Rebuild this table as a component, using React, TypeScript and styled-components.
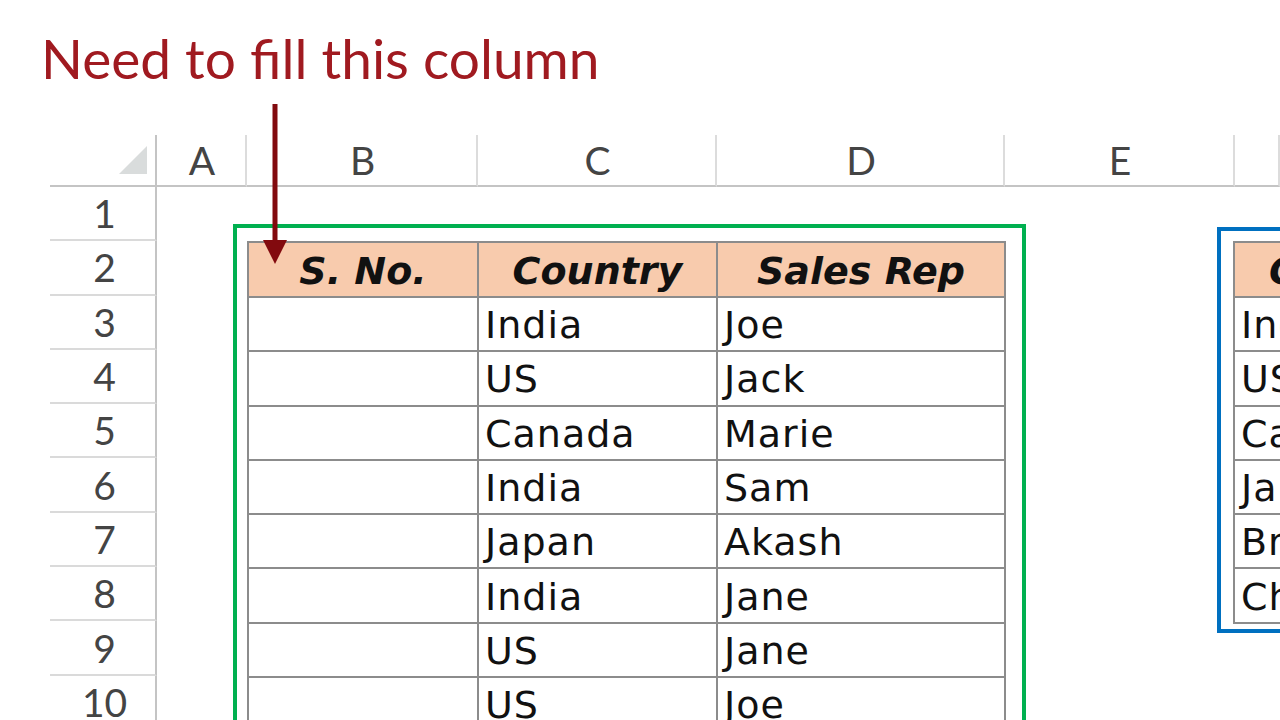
import React from 'react'
import styled, { createGlobalStyle } from 'styled-components'

const GlobalStyle = createGlobalStyle`
  html, body {
    margin: 0;
    padding: 0;
    background: #ffffff;
    overflow: hidden;
  }
`

const ROW_H = 54.3
const HEAD_FONT = `Lato, 'Open Sans', sans-serif`
const CELL_FONT = `'DejaVu Sans', Verdana, sans-serif`

const Page = styled.div`
  position: relative;
  width: 1280px;
  height: 720px;
  overflow: hidden;
  background: #fff;
`

const Title = styled.h1`
  margin: 0;
  height: 135px;
  box-sizing: border-box;
  padding: 31px 0 0 41px;
  font-family: ${HEAD_FONT};
  font-weight: 400;
  font-size: 55px;
  line-height: 1;
  color: #a01a20;
`

const Sheet = styled.div`
  margin-left: 50px;
  display: grid;
  grid-template-columns: 107px 90px 231px 239px 288px 230px 45px;
  grid-template-rows: 52px repeat(10, ${ROW_H}px);
`

const Corner = styled.div`
  grid-column: 1;
  grid-row: 1;
  border-right: 2px solid #c4c4c4;
  border-bottom: 2px solid #c4c4c4;
  display: flex;
  align-items: flex-end;
  justify-content: flex-end;
  padding: 0 8px 11px 0;
`

const CornerMark = styled.div`
  width: 0;
  height: 0;
  border-left: 28px solid transparent;
  border-bottom: 28px solid #d9dcdc;
`

const ColHead = styled.div<{ $col: number }>`
  grid-row: 1;
  grid-column: ${({ $col }) => $col};
  border-right: 2px solid #dcdcdc;
  border-bottom: 2px solid #c4c4c4;
  display: flex;
  align-items: center;
  justify-content: center;
  padding-left: 2px;
  font-family: ${HEAD_FONT};
  font-size: 39px;
  color: #444;
`

const RowHead = styled.div<{ $row: number }>`
  grid-column: 1;
  grid-row: ${({ $row }) => $row};
  border-right: 2px solid #c4c4c4;
  border-bottom: 2px solid #dadada;
  display: flex;
  align-items: center;
  justify-content: center;
  padding-left: 4px;
  font-family: ${HEAD_FONT};
  font-size: 39px;
  color: #444;
`

const Frame = styled.div<{ $color: string }>`
  align-self: start;
  justify-self: start;
  border: 4px solid ${({ $color }) => $color};
`

const GreenFrame = styled(Frame)`
  grid-column: 2 / 7;
  grid-row: 2 / 12;
  margin: 37px 0 0 76px;
  padding: 13px 16px 0 10px;
`

const BlueFrame = styled(Frame)`
  grid-column: 6 / 8;
  grid-row: 2 / 12;
  margin: 40px 0 0 212px;
  padding: 10px 0 5px 12px;
  width: 320px;
`

const DataTable = styled.div<{ $cols: string }>`
  display: grid;
  grid-template-columns: ${({ $cols }) => $cols};
  grid-auto-rows: ${ROW_H}px;
  grid-template-rows: 55px;
  border-top: 2px solid #8c8c8c;
  border-left: 2px solid #8c8c8c;
`

const Cell = styled.div<{ $head?: boolean }>`
  box-sizing: border-box;
  border-right: 2px solid #8c8c8c;
  border-bottom: 2px solid #8c8c8c;
  display: flex;
  align-items: center;
  justify-content: ${({ $head }) => ($head ? 'center' : 'flex-start')};
  padding: ${({ $head }) => ($head ? '2px 0 0 0' : '2px 0 0 6px')};
  background: ${({ $head }) => ($head ? '#f8cbad' : '#fff')};
  font-family: ${CELL_FONT};
  font-size: 38px;
  letter-spacing: ${({ $head }) => ($head ? '0' : '1px')};
  font-weight: ${({ $head }) => ($head ? 700 : 400)};
  font-style: ${({ $head }) => ($head ? 'italic' : 'normal')};
  color: #111;
  white-space: nowrap;
  overflow: hidden;
`

const Arrow = styled.svg`
  position: absolute;
  left: 262px;
  top: 104px;
`

const letters = ['A', 'B', 'C', 'D', 'E', '']

const rows: [string, string][] = [
  ['India', 'Joe'],
  ['US', 'Jack'],
  ['Canada', 'Marie'],
  ['India', 'Sam'],
  ['Japan', 'Akash'],
  ['India', 'Jane'],
  ['US', 'Jane'],
  ['US', 'Joe'],
]

const lookup = ['India', 'US', 'Canada', 'Japan', 'Brazil', 'China']

export default function App() {
  return (
    <Page>
      <GlobalStyle />
      <Title>Need to fill this column</Title>
      <Sheet>
        <Corner>
          <CornerMark />
        </Corner>
        {letters.map((l, i) => (
          <ColHead key={i} $col={i + 2}>{l}</ColHead>
        ))}
        {Array.from({ length: 10 }, (_, i) => (
          <RowHead key={i} $row={i + 2}>{i + 1}</RowHead>
        ))}

        <GreenFrame $color="#00b050">
          <DataTable $cols="230px 239px 288px">
            <Cell $head>S. No.</Cell>
            <Cell $head>Country</Cell>
            <Cell $head>Sales Rep</Cell>
            {rows.map(([country, rep], i) => (
              <React.Fragment key={i}>
                <Cell />
                <Cell>{country}</Cell>
                <Cell>{rep}</Cell>
              </React.Fragment>
            ))}
          </DataTable>
        </GreenFrame>

        <BlueFrame $color="#0070c0">
          <DataTable $cols="240px 240px">
            <Cell $head>Country</Cell>
            <Cell $head>Sales Rep</Cell>
            {lookup.map((c, i) => (
              <React.Fragment key={i}>
                <Cell>{c}</Cell>
                <Cell />
              </React.Fragment>
            ))}
          </DataTable>
        </BlueFrame>
      </Sheet>

      <Arrow width="26" height="162" viewBox="0 0 26 162">
        <rect x="10.5" y="0" width="5" height="140" fill="#820a0e" />
        <polygon points="1,136 25,136 13,160" fill="#820a0e" />
      </Arrow>
    </Page>
  )
}
